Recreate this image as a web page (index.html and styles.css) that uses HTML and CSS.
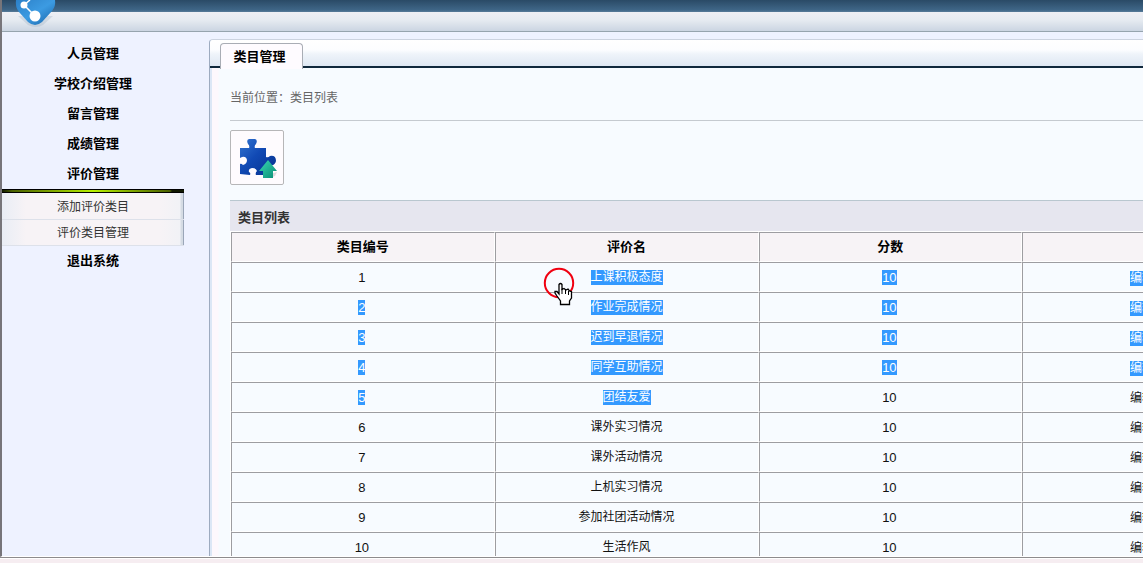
FILE: index.html
```html
<!DOCTYPE html>
<html lang="zh-CN">
<head>
<meta charset="utf-8">
<title>类目管理</title>
<link rel="stylesheet" href="styles.css">
</head>
<body>
<div class="frame">
  <header class="top">
    <svg class="logo" width="48" height="28" viewBox="0 0 48 28" aria-hidden="true">
      <defs>
        <linearGradient id="lg" x1="0" y1="0" x2="1" y2="1"><stop offset="0" stop-color="#2c80c8"/><stop offset=".5" stop-color="#3c9be2"/><stop offset="1" stop-color="#1763a8"/></linearGradient>
      </defs>
      <path d="M3 16L13 25Q21 29 28 25L38 16Z" fill="#8aa0b5" opacity=".25"/>
      <path d="M1 0H40Q41 6 37 11L27 22Q20 28 13 22L4 12Q0 7 1 0Z" fill="url(#lg)"/>
      <path d="M9 5L20 16M9 5L15 0" stroke="#fff" stroke-width="1.5"/>
      <circle cx="9" cy="5" r="3.500" fill="#fff"/><circle cx="20" cy="16" r="5.500" fill="#fff"/>
    </svg>
  </header>
  <div class="body">
    <nav class="side">
      <a href="#" class="item">人员管理</a>
      <a href="#" class="item">学校介绍管理</a>
      <a href="#" class="item">留言管理</a>
      <a href="#" class="item">成绩管理</a>
      <a href="#" class="item">评价管理</a>
      <div class="sub">
        <a href="#">添加评价类目</a>
        <a href="#">评价类目管理</a>
      </div>
      <a href="#" class="item">退出系统</a>
    </nav>
    <main class="panel">
      <div class="tabs"><a href="#" class="tab">类目管理</a></div>
      <div class="content">
        <p class="crumb">当前位置：类目列表</p>
        <button class="tool" aria-label="更新类目">
          <svg width="40" height="42" viewBox="0 0 40 42" aria-hidden="true">
            <defs>
              <linearGradient id="pz" x1="0" y1="0" x2="1" y2="1"><stop offset="0" stop-color="#3274d0"/><stop offset=".45" stop-color="#1149b4"/><stop offset="1" stop-color="#06318c"/></linearGradient>
              <linearGradient id="ar" x1="0" y1="0" x2="1" y2="1"><stop offset="0" stop-color="#3ad9b4"/><stop offset="1" stop-color="#078b73"/></linearGradient>
            </defs>
            <path d="M3 11H12Q13 9 11 7Q9 3 12 2H18Q21 3 19 7Q17 9 18 11H29V20Q31 21 33 19Q39 18 39 24Q38 29 33 28Q31 26 29 29V38H19Q18 36 20 34Q19 31 15 31Q11 32 12 35Q14 36 13 38L3 37V27Q4 26 6 28Q10 27 10 23Q9 19 5 20L3 21Z" fill="url(#pz)"/>
            <path d="M33 37L40 35L38 39L33 41Z" fill="#aaa" opacity=".4"/>
            <path d="M31 23L40 34H36V41H26V34H22Z" fill="url(#ar)"/>
          </svg>
        </button>
        <section class="list">
          <h2>类目列表</h2>
          <table>
            <thead><tr><th>类目编号</th><th>评价名</th><th>分数</th><th></th></tr></thead>
            <tbody>
              <tr><td>1</td><td><mark>上课积极态度</mark></td><td><mark>10</mark></td><td><mark>编辑删除</mark></td></tr>
              <tr><td><mark>2</mark></td><td><mark>作业完成情况</mark></td><td><mark>10</mark></td><td><mark>编辑删除</mark></td></tr>
              <tr><td><mark>3</mark></td><td><mark>迟到早退情况</mark></td><td><mark>10</mark></td><td><mark>编辑删除</mark></td></tr>
              <tr><td><mark>4</mark></td><td><mark>同学互助情况</mark></td><td><mark>10</mark></td><td><mark>编辑删除</mark></td></tr>
              <tr><td><mark>5</mark></td><td><mark>团结友爱</mark></td><td>10</td><td>编辑删除</td></tr>
              <tr><td>6</td><td>课外实习情况</td><td>10</td><td>编辑删除</td></tr>
              <tr><td>7</td><td>课外活动情况</td><td>10</td><td>编辑删除</td></tr>
              <tr><td>8</td><td>上机实习情况</td><td>10</td><td>编辑删除</td></tr>
              <tr><td>9</td><td>参加社团活动情况</td><td>10</td><td>编辑删除</td></tr>
              <tr><td>10</td><td>生活作风</td><td>10</td><td>编辑删除</td></tr>
            </tbody>
          </table>
        </section>
      </div>
    </main>
  </div>
</div>
<footer class="status"></footer>
<svg class="pointer" width="34" height="40" viewBox="0 0 34 40" aria-hidden="true">
  <circle cx="16" cy="16" r="14.200" fill="none" stroke="#f00010" stroke-width="2"/>
  <path d="M16 17.500Q17.500 15.500 19 17.500V22.500L21 21.500L23 23L25 22L26.500 24L28.500 24.500V31L26.500 34V37.500H17.500V34L14 29L12 26V24.500H14L16 27Z" fill="#fff" stroke="#000" stroke-width="1.300"/>
  <path d="M19 22V27M22.500 23V27M25.500 24V28" stroke="#000"/>
</svg>
</body>
</html>
```
FILE: styles.css
```css
* { box-sizing: border-box; }
body {
  margin: 0;
  height: 100vh;
  overflow: hidden;
  display: flex;
  flex-direction: column;
  background: #fff;
  font: 12px/16px "Liberation Sans", "Noto Sans CJK SC", sans-serif;
  color: #111;
}
a { color: inherit; text-decoration: none; }
.frame {
  flex: 1;
  min-height: 0;
  display: flex;
  flex-direction: column;
  border-left: 2px solid #77757a;
  border-bottom: 1px solid #fff;
  background: #eef2ff;
}
.top {
  flex: none;
  height: 32px;
  padding-left: 13px;
  border-bottom: 1px solid #96a4ae;
  background: linear-gradient(#2a4a66 0, #3f6687 10px, #587b98 12px, #eeeff4 12px, #e6ebf1 20px, #cbd5e2 31px);
}
.logo { display: block; }
.body { flex: 1; min-height: 0; display: flex; }
.side { flex: none; width: 207px; padding-top: 7px; }
.item {
  display: block;
  width: 182px;
  font-size: 13px;
  font-weight: bold;
  line-height: 30px;
  text-align: center;
  color: #000;
}
.sub {
  width: 182px;
  padding-top: 5px;
  background: linear-gradient(#000, #000) top / 100% 1px no-repeat,
    linear-gradient(90deg, #101800, #4a6000 10px, #b8f000 50%, #4a6000 168px, #101800 170px) 0 1px / 100% 2px no-repeat,
    linear-gradient(#000, #000) 0 3px / 100% 1px no-repeat,
    linear-gradient(#9aa6b8, #9aa6b8) right / 1px 100% no-repeat,
    linear-gradient(90deg, #e9edf5, #f7f3f6 24px, #f7f3f6 158px, #f1f2f6 178px, #d5dce4 179px);
}
.sub a {
  display: block;
  height: 26px;
  line-height: 27px;
  text-align: center;
  color: #333;
  border-bottom: 1px solid #dde1ea;
}
.panel {
  flex: 1;
  min-width: 0;
  overflow: hidden;
  margin-top: 7px;
  border-left: 1px solid #9dabc0;
  border-top: 1px solid #ccd3e0;
  border-top-left-radius: 4px;
  background: linear-gradient(90deg, #dce7f6 2px, #fdf8fd 2px, #fdf8fd 8px, #f7fbff 9px);
}
.tabs {
  height: 28px;
  padding: 3px 0 0 10px;
  background: linear-gradient(#10283c, #10283c) bottom / 100% 2px no-repeat, linear-gradient(#fff, #fcfdff 10px, #eff4fa 14px, #dce5f1);
}
.tab {
  display: block;
  width: 83px;
  height: 26px;
  padding-right: 4px;
  border: 1px solid #a9adb5;
  border-bottom: 0;
  border-radius: 4px 4px 0 0;
  background: #fefbff;
  font-size: 13px;
  font-weight: bold;
  line-height: 25px;
  text-align: center;
  color: #000;
}
.content { padding: 21px 0 0 20px; }
.crumb {
  margin: 0 0 9px;
  height: 32px;
  border-bottom: 1px solid #c5cad0;
  line-height: 18px;
  color: #666;
}
.tool {
  display: flex;
  align-items: center;
  justify-content: center;
  width: 54px;
  height: 55px;
  padding: 0;
  border: 1px solid #b6b6b8;
  border-radius: 2px;
  background: #fefbfe;
}
.list { margin-top: 15px; }
h2 {
  margin: 0;
  height: 31px;
  padding-left: 8px;
  border-top: 1px solid #b9c7cf;
  background: #e6e6ef;
  font-size: 13px;
  line-height: 33px;
  color: #333;
}
table {
  width: 1057px;
  table-layout: fixed;
  border-collapse: separate;
  border-spacing: 0;
  border: 1px solid #fff;
}
th, td {
  height: 30px;
  padding: 0;
  border: 1px solid #fff;
  border-top-color: #9d9da1;
  border-left-color: #9d9da1;
  text-align: center;
  font-size: 12px;
  line-height: 16px;
}
th { background: #f7f3f6; font-size: 13px; color: #000; }
td:first-child, td:nth-child(3) { padding: 2px 2px 0 0; font-size: 13px; }
td:last-child { padding: 2px 0 0; }
mark {
  display: inline-block;
  background: #3399ff;
  color: #fff;
  line-height: 15px;
}
.status {
  flex: none;
  height: 6px;
  border-top: 1px solid #8d8b8d;
  background: linear-gradient(#fff 1px, #f6edf1 1px);
}
.pointer { position: absolute; left: 543px; top: 267px; }
```
